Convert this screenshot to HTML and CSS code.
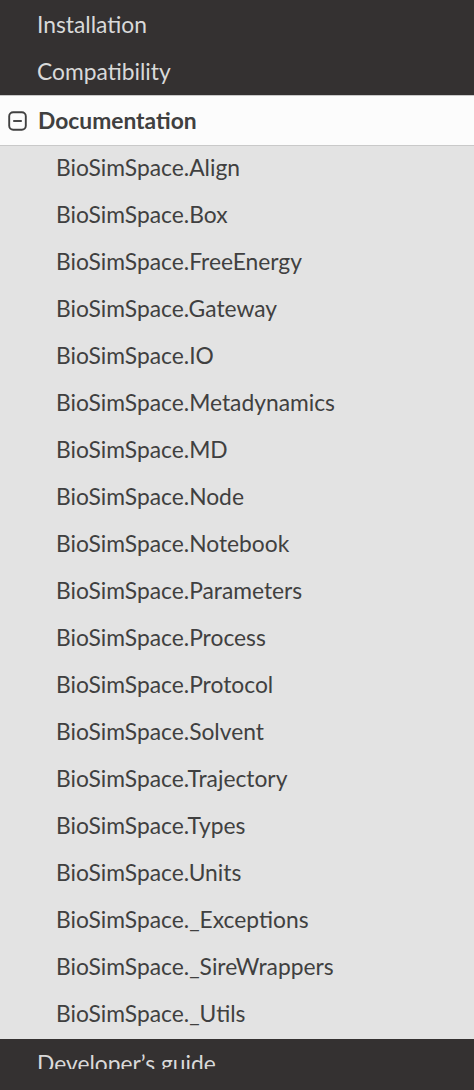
FILE: index.html
```html
<!DOCTYPE html>
<html lang="en">
<head>
<meta charset="utf-8">
<title>BioSimSpace navigation</title>
<link rel="stylesheet" href="styles.css">
</head>
<body>
<nav class="menu">
  <ul class="list">
    <li class="l1"><a href="#">Installation</a></li>
    <li class="l1"><a href="#">Compatibility</a></li>
    <li class="l1 current">
      <a href="#" class="current-link">
        <svg class="toggle" width="19" height="20" viewBox="0 0 19 20" aria-hidden="true">
          <rect x="1.2" y="1.2" width="16.6" height="17.6" rx="4" ry="4" fill="none" stroke="#404040" stroke-width="1.9"/>
          <line x1="5.2" y1="10" x2="13.8" y2="10" stroke="#404040" stroke-width="1.9"/>
        </svg>
        <span>Documentation</span>
      </a>
      <ul class="sub">
        <li class="l2"><a href="#">BioSimSpace.Align</a></li>
        <li class="l2"><a href="#">BioSimSpace.Box</a></li>
        <li class="l2"><a href="#">BioSimSpace.FreeEnergy</a></li>
        <li class="l2"><a href="#">BioSimSpace.Gateway</a></li>
        <li class="l2"><a href="#">BioSimSpace.IO</a></li>
        <li class="l2"><a href="#">BioSimSpace.Metadynamics</a></li>
        <li class="l2"><a href="#">BioSimSpace.MD</a></li>
        <li class="l2"><a href="#">BioSimSpace.Node</a></li>
        <li class="l2"><a href="#">BioSimSpace.Notebook</a></li>
        <li class="l2"><a href="#">BioSimSpace.Parameters</a></li>
        <li class="l2"><a href="#">BioSimSpace.Process</a></li>
        <li class="l2"><a href="#">BioSimSpace.Protocol</a></li>
        <li class="l2"><a href="#">BioSimSpace.Solvent</a></li>
        <li class="l2"><a href="#">BioSimSpace.Trajectory</a></li>
        <li class="l2"><a href="#">BioSimSpace.Types</a></li>
        <li class="l2"><a href="#">BioSimSpace.Units</a></li>
        <li class="l2"><a href="#">BioSimSpace._Exceptions</a></li>
        <li class="l2"><a href="#">BioSimSpace._SireWrappers</a></li>
        <li class="l2"><a href="#">BioSimSpace._Utils</a></li>
      </ul>
    </li>
    <li class="l1"><a href="#">Developer’s guide</a></li>
  </ul>
</nav>
</body>
</html>
```
FILE: styles.css
```css
html, body {
  margin: 0;
  padding: 0;
  background: #343131;
}
body {
  font-family: Lato, "Liberation Sans", sans-serif;
  font-size: 22.8px;
  -webkit-font-smoothing: antialiased;
}
.menu {
  height: 1069px;
  overflow: hidden;
  background: #343131;
}
.list, .sub {
  list-style: none;
  margin: 0;
  padding: 0;
}
.l1 > a {
  display: flex;
  align-items: center;
  height: 47.5px;
  padding-left: 37px;
  color: #d9d9d9;
  text-decoration: none;
  box-sizing: border-box;
}
.current > a.current-link {
  height: 51px;
  padding-left: 8px;
  padding-bottom: 1px;
  gap: 11px;
  background: #fcfcfc;
  color: #404040;
  font-weight: 700;
  border-top: 1.6px solid #c9c9c9;
  border-bottom: 1.6px solid #c9c9c9;
}
.toggle {
  flex: none;
  display: block;
  margin-top: 1px;
}
.sub {
  background: #e3e3e3;
}
.l2 > a {
  display: flex;
  align-items: center;
  height: 47px;
  padding-left: 56px;
  padding-bottom: 5px;
  color: #404040;
  text-decoration: none;
  box-sizing: border-box;
}
```
